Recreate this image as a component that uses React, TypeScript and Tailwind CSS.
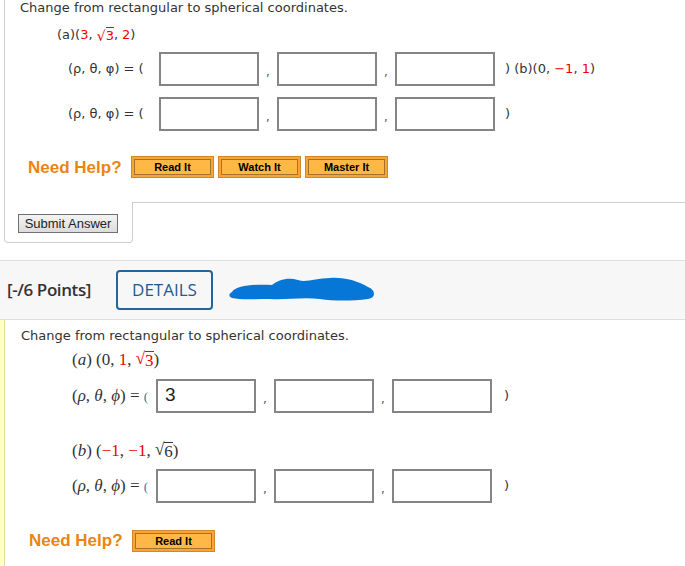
import React from "react";

const VERDANA = { fontFamily: "'DejaVu Sans', Verdana, sans-serif" };
const ARIAL = { fontFamily: "'Liberation Sans', Arial, sans-serif" };
const SERIF = { fontFamily: "'Liberation Serif', 'Times New Roman', serif" };
const OPEN = { fontFamily: "'Open Sans', 'Noto Sans', sans-serif" };

function Box({ value }: { value?: string }) {
  return (
    <div className="flex h-[34px] w-[100px] items-center border-2 border-[#858585] bg-white pl-[7px] text-[19px] text-[#222]" style={ARIAL}>
      {value}
    </div>
  );
}

function Comma() {
  return <span className="w-[18px] pt-[6px] text-center text-[12px] text-[#555]">,</span>;
}

function HelpButton({ label }: { label: string }) {
  return (
    <div className="flex h-[22px] w-[83px] items-stretch border border-[#d0882a] bg-[#f7a534] p-[2px]">
      <span className="flex flex-1 items-center justify-center border border-[#a8712a] bg-[#ffb845] text-[11px] font-bold text-black" style={ARIAL}>
        {label}
      </span>
    </div>
  );
}

function NeedHelp({ buttons }: { buttons: string[] }) {
  return (
    <div className="flex items-center">
      <span className="w-[103px] text-[17px] font-bold text-[#ec8510]" style={ARIAL}>
        Need Help?
      </span>
      <div className="flex gap-[4px]">
        {buttons.map((b) => (
          <HelpButton key={b} label={b} />
        ))}
      </div>
    </div>
  );
}

function Sqrt({ n, className }: { n: string; className?: string }) {
  return (
    <span className={`inline-flex items-end ${className ?? ""}`}>
      <span className="text-[14px] leading-none">√</span>
      <span className="border-t border-current leading-[15px]">{n}</span>
    </span>
  );
}

function SerifSqrt({ n, className }: { n: string; className?: string }) {
  return (
    <span className={`inline-flex items-start ${className ?? ""}`}>
      <span className="mt-[-1px] text-[17px] leading-[19px]">√</span>
      <span className="mt-[1px] border-t border-current leading-[17px]">{n}</span>
    </span>
  );
}

export default function App() {
  return (
    <div className="flex h-[566px] w-[685px] flex-col overflow-hidden bg-white text-[#333]" style={VERDANA}>
      {/* first question */}
      <div className="ml-[4px] border-l border-[#cfcfcf] pb-[22px]">
        <div className="pl-[15px] text-[13px] leading-[15px]">Change from rectangular to spherical coordinates.</div>
        <div className="mt-[10px] flex items-center pl-[52px] text-[13px]">
          (a)(<span className="text-[#e00]">3</span>,&nbsp;
          <Sqrt n="3" className="text-[#e00]" />, <span className="ml-[4px] text-[#e00]">2</span>)
        </div>

        <div className="mt-[7px] flex items-center pl-[63px] text-[13px]">
          <span className="w-[91px]">(ρ, θ, φ) = (</span>
          <Box />
          <Comma />
          <Box />
          <Comma />
          <Box />
          <span className="ml-[10px]">
            ) (b)(0, <span className="text-[#e00]">−1</span>, <span className="text-[#e00]">1</span>)
          </span>
        </div>
        <div className="mt-[11px] flex items-center pl-[63px] text-[13px]">
          <span className="w-[91px]">(ρ, θ, φ) = (</span>
          <Box />
          <Comma />
          <Box />
          <Comma />
          <Box />
          <span className="ml-[10px]">)</span>
        </div>

        <div className="mt-[24px] pl-[23px]">
          <NeedHelp buttons={["Read It", "Watch It", "Master It"]} />
        </div>
      </div>

      <div className="flex">
        <div className="ml-[4px] flex h-[41px] w-[129px] items-start rounded-b-[4px] border border-t-0 border-[#cfcfcf] pl-[13px] pt-[12px]">
          <button className="h-[19px] w-[100px] border border-[#707070] bg-gradient-to-b from-[#f4f4f4] to-[#dcdcdc] text-[13px] leading-none text-[#222]" style={ARIAL}>
            Submit Answer
          </button>
        </div>
        <div className="h-[41px] flex-1 border-t border-[#cfcfcf]" />
      </div>

      {/* header band */}
      <div className="mt-[17px] flex h-[60px] shrink-0 items-center border-y border-[#dedede] bg-[#f7f7f7] pl-[7px]" style={OPEN}>
        <span className="text-[17px] font-semibold tracking-[-0.4px] text-[#333]">[-/6 Points]</span>
        <span className="ml-[25px] flex h-[40px] w-[97px] items-center justify-center rounded-[4px] border-2 border-[#22679b] text-[17px] text-[#1c5c8c]">
          DETAILS
        </span>
        <svg className="ml-[13px] mt-[-4px]" width="152" height="32" viewBox="0 0 152 32">
          <path
            d="M6 20 C10 13 30 12 46 13 C52 8 62 5 72 8 C80 11 90 6 104 6 C118 5 132 9 142 15 C150 18 150 26 142 27 C126 29 108 29 94 27 C76 25 60 28 44 27 C30 27 14 28 6 26 C2 24 3 22 6 20 Z"
            fill="#0677d6"
          />
        </svg>
      </div>

      {/* second question */}
      <div className="flex flex-1">
        <div className="w-[5px] self-stretch border-r border-[#dede9c] bg-[#ffffcc]" />
        <div className="flex-1 pl-[16px] pt-[8px]">
          <div className="text-[13px] leading-[15px]">Change from rectangular to spherical coordinates.</div>
          <div className="mt-[4px] flex items-center pl-[51px] text-[17px] text-[#333]" style={SERIF}>
            (<i>a</i>)&nbsp;(0,&nbsp;<span className="text-[#e00]">1</span>,&nbsp;
            <SerifSqrt n="3" className="text-[#e00]" />)
          </div>
          <div className="mt-[6px] flex items-center pl-[51px]">
            <span className="w-[84px] text-[17px]" style={SERIF}>
              (<i>ρ</i>, <i>θ</i>, <i>ϕ</i>) = <span className="text-[13px] text-[#2b73b8]">(</span>
            </span>
            <Box value="3" />
            <Comma />
            <Box />
            <Comma />
            <Box />
            <span className="ml-[12px] text-[13px]">)</span>
          </div>

          <div className="mt-[25px] flex items-center pl-[51px] text-[17px]" style={SERIF}>
            (<i>b</i>)&nbsp;(<span className="text-[#e00]">−1</span>,&nbsp;<span className="text-[#e00]">−1</span>,&nbsp;
            <SerifSqrt n="6" />)
          </div>
          <div className="mt-[6px] flex items-center pl-[51px]">
            <span className="w-[84px] text-[17px]" style={SERIF}>
              (<i>ρ</i>, <i>θ</i>, <i>ϕ</i>) = <span className="text-[13px] text-[#2b73b8]">(</span>
            </span>
            <Box />
            <Comma />
            <Box />
            <Comma />
            <Box />
            <span className="ml-[12px] text-[13px]">)</span>
          </div>

          <div className="mt-[25px] pl-[8px]">
            <NeedHelp buttons={["Read It"]} />
          </div>
        </div>
      </div>
    </div>
  );
}
